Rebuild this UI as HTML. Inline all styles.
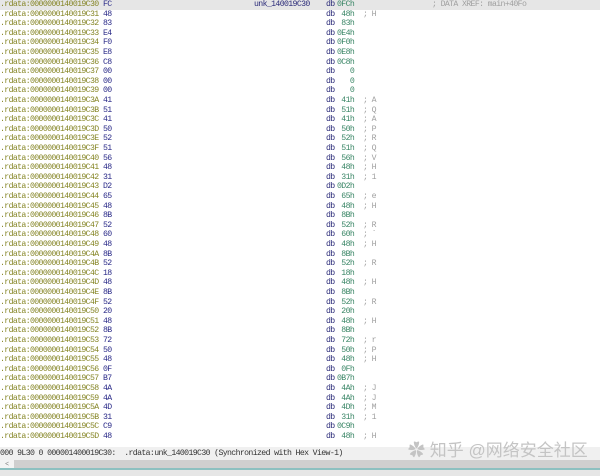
<!DOCTYPE html>
<html><head><meta charset="utf-8"><style>
html,body{margin:0;padding:0;width:600px;height:476px;overflow:hidden;background:#fff;}
.v{position:absolute;left:0;top:0;width:600px;height:446px;font-family:"Liberation Mono",monospace;font-size:8.2px;letter-spacing:-0.63px;}
.l{position:absolute;left:0;height:9.6px;line-height:9.6px;width:600px;white-space:pre;}
.l span{position:absolute;top:0;}
.a{left:0;color:#858525;}
.b{left:103px;color:#2a2a88;}
.lb{left:254px;color:#2a2a78;}
.d{left:326px;color:#2a2a78;}
.n{left:337px;color:#3a8666;}
.c{left:363px;color:#a0a0a0;}
.x{left:432px;color:#a0a0a0;}
.sb{position:absolute;left:0;top:447px;width:600px;height:13px;background:#f0f0f0;font-family:"Liberation Mono",monospace;font-size:8.2px;letter-spacing:-0.63px;line-height:13px;color:#333;white-space:pre;}
.sc{position:absolute;left:0;top:460px;width:600px;height:8px;background:#cfcfcf;}
.sc i{position:absolute;left:0;top:0;width:14px;height:8px;background:#f4f4f4;font-style:normal;font-size:7px;line-height:8px;color:#333;text-align:center;}
.tl{position:absolute;left:0;top:468px;width:600px;height:2px;background:#8cc0c0;}
.bt{position:absolute;left:0;top:470px;width:600px;height:6px;background:#e6e6e6;}
.wm{position:absolute;left:408px;top:436px;font-family:"Liberation Sans","Noto Sans CJK SC",sans-serif;font-size:17px;color:#c4c4c4;}
</style></head><body>
<div class="v" id="v"></div>
<div class="sb">000 9L30 0 000001400019C30:  .rdata:unk_140019C30 (Synchronized with Hex View-1)</div>
<div class="sc"><i>&lt;</i></div>
<div class="tl"></div><div class="bt"></div>
<div class="wm">✿ 知乎 @网络安全社区</div>
<script>
var d=[["30","FC","0FCh",""],["31","48","48h","H"],["32","83","83h",""],["33","E4","0E4h",""],["34","F0","0F0h",""],["35","E8","0E8h",""],["36","C8","0C8h",""],["37","00","0",""],["38","00","0",""],["39","00","0",""],["3A","41","41h","A"],["3B","51","51h","Q"],["3C","41","41h","A"],["3D","50","50h","P"],["3E","52","52h","R"],["3F","51","51h","Q"],["40","56","56h","V"],["41","48","48h","H"],["42","31","31h","1"],["43","D2","0D2h",""],["44","65","65h","e"],["45","48","48h","H"],["46","8B","8Bh",""],["47","52","52h","R"],["48","60","60h","`"],["49","48","48h","H"],["4A","8B","8Bh",""],["4B","52","52h","R"],["4C","18","18h",""],["4D","48","48h","H"],["4E","8B","8Bh",""],["4F","52","52h","R"],["50","20","20h",""],["51","48","48h","H"],["52","8B","8Bh",""],["53","72","72h","r"],["54","50","50h","P"],["55","48","48h","H"],["56","0F","0Fh",""],["57","B7","0B7h",""],["58","4A","4Ah","J"],["59","4A","4Ah","J"],["5A","4D","4Dh","M"],["5B","31","31h","1"],["5C","C9","0C9h",""],["5D","48","48h","H"]];
var h="";
for(var i=0;i<d.length;i++){var r=d[i];var val=("    "+r[2]).slice(-4);
h+='<div class="l" style="top:'+(i*9.6)+'px;'+(i==0?'background:#e6e6e6;':'')+'"><span class="a">.rdata:0000000140019C'+r[0]+'</span><span class="b">'+r[1]+'</span>'+(i==0?'<span class="lb">unk_140019C30</span><span class="x">; DATA XREF: main+40Fo</span>':'')+'<span class="d">db</span><span class="n">'+val+'</span>'+(r[3]?'<span class="c">; '+r[3]+'</span>':'')+'</div>';}
document.getElementById("v").innerHTML=h;
</script>
</body></html>
